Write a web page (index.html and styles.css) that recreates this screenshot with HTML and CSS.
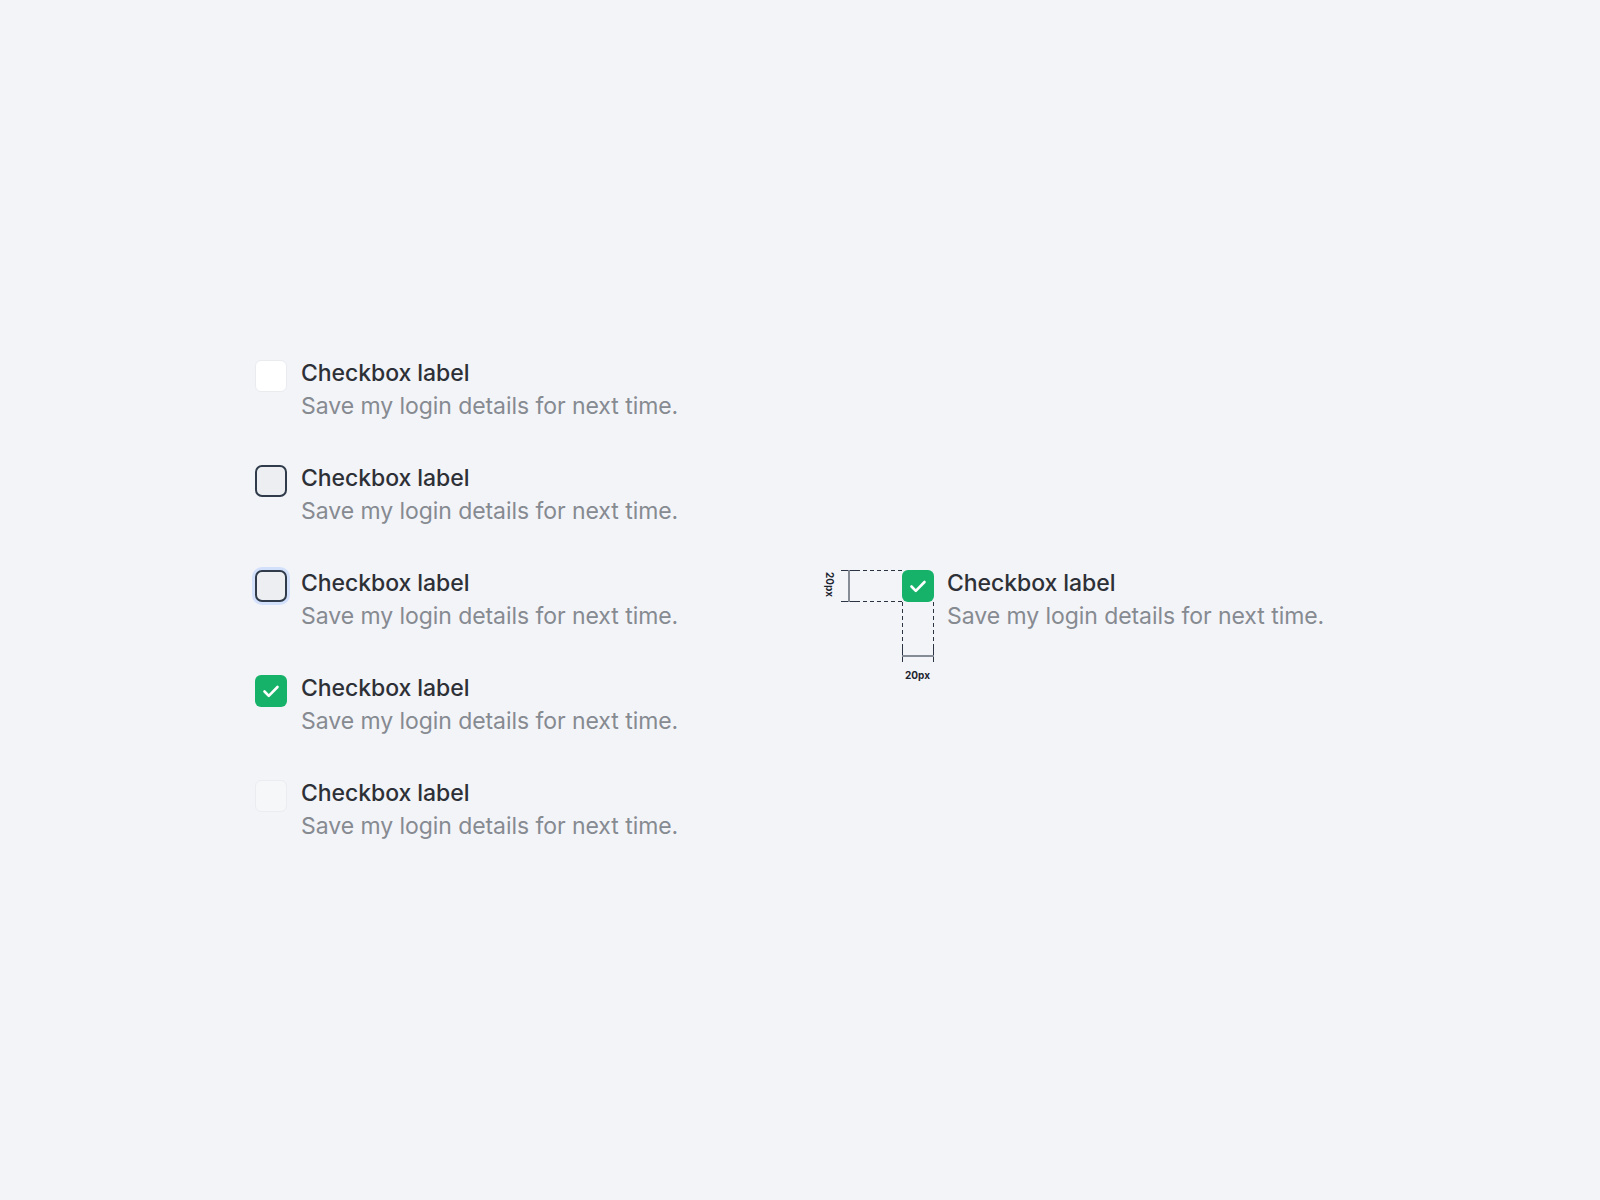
FILE: index.html
```html
<!DOCTYPE html>
<html lang="en">
<head>
<meta charset="utf-8">
<title>Checkbox</title>
<link rel="stylesheet" href="styles.css">
</head>
<body>
<main class="canvas">
  <section class="column">
    <div class="row">
      <span class="box box-default"></span>
      <div class="text">
        <div class="label">Checkbox label</div>
        <div class="desc">Save my login details for next time.</div>
      </div>
    </div>
    <div class="row">
      <span class="box box-hover"></span>
      <div class="text">
        <div class="label">Checkbox label</div>
        <div class="desc">Save my login details for next time.</div>
      </div>
    </div>
    <div class="row">
      <span class="box box-hover box-focus"></span>
      <div class="text">
        <div class="label">Checkbox label</div>
        <div class="desc">Save my login details for next time.</div>
      </div>
    </div>
    <div class="row">
      <span class="box box-checked">
        <svg viewBox="0 0 32 32" class="check"><path d="M9.5 16.5 L13.8 20.8 L22.5 12" fill="none" stroke="#fff" stroke-width="2.6" stroke-linecap="round" stroke-linejoin="round"/></svg>
      </span>
      <div class="text">
        <div class="label">Checkbox label</div>
        <div class="desc">Save my login details for next time.</div>
      </div>
    </div>
    <div class="row">
      <span class="box box-disabled"></span>
      <div class="text">
        <div class="label">Checkbox label</div>
        <div class="desc">Save my login details for next time.</div>
      </div>
    </div>
  </section>

  <section class="column column-spec">
    <div class="row">
      <span class="box box-checked box-spec">
        <svg viewBox="0 0 32 32" class="check"><path d="M9.5 16.5 L13.8 20.8 L22.5 12" fill="none" stroke="#fff" stroke-width="2.6" stroke-linecap="round" stroke-linejoin="round"/></svg>
        <span class="dash dash-h dash-top"></span>
        <span class="dash dash-h dash-bottom"></span>
        <span class="tick tick-h tick-top"></span>
        <span class="tick tick-h tick-bottom"></span>
        <span class="measure measure-v"></span>
        <span class="dim dim-v">20px</span>

        <span class="dash dash-v dash-left"></span>
        <span class="dash dash-v dash-right"></span>
        <span class="tick tick-v tick-left"></span>
        <span class="tick tick-v tick-right"></span>
        <span class="measure measure-h"></span>
        <span class="dim dim-h">20px</span>
      </span>
      <div class="text">
        <div class="label">Checkbox label</div>
        <div class="desc">Save my login details for next time.</div>
      </div>
    </div>
  </section>
</main>
</body>
</html>
```

FILE: styles.css
```css
html, body {
  margin: 0;
  padding: 0;
}

body {
  background: #f3f4f8;
  font-family: Inter, "Noto Sans", "Liberation Sans", sans-serif;
  width: 1600px;
  height: 1200px;
}

.canvas {
  display: flex;
  padding: 357px 0 0 255px;
}

.column {
  display: flex;
  flex-direction: column;
  gap: 39px;
  width: 647px;
}

.column-spec {
  padding-top: 210px;
  width: auto;
}

.row {
  display: flex;
  align-items: flex-start;
  gap: 14px;
}

.column-spec .row {
  gap: 13px;
}

.box {
  position: relative;
  flex: none;
  box-sizing: border-box;
  width: 32px;
  height: 32px;
  margin-top: 3px;
  border-radius: 6px;
}

.box-default {
  background: #ffffff;
  border: 1px solid #e9ebef;
}

.box-hover {
  background: #eceef1;
  border: 2px solid #2f3b4a;
  border-radius: 7px;
}

.box-focus {
  box-shadow: 0 0 0 3px #d3e0fb;
}

.box-checked {
  background: #17b26a;
}

.box-disabled {
  background: #f6f7f9;
  border: 1px solid #eaecf0;
}

.check {
  display: block;
  width: 32px;
  height: 32px;
}

.text {
  font-size: 23px;
  line-height: 33px;
  letter-spacing: -0.06px;
}

.label {
  color: #2d3036;
  font-weight: 470;
}

.desc {
  color: #868a91;
}

/* spec annotations (overlay on the spec checkbox) */
.dash {
  position: absolute;
}

.dash-h {
  left: -46px;
  width: 46px;
  height: 1px;
  background: repeating-linear-gradient(to right, #2a3442 0 4px, transparent 4px 7px);
}

.dash-top { top: 0; }
.dash-bottom { top: 31px; }

.dash-v {
  top: 32px;
  height: 60px;
  width: 1px;
  background: repeating-linear-gradient(to bottom, #2a3442 0 4px, transparent 4px 7px);
}

.dash-left { left: 0; }
.dash-right { left: 31px; }

.tick {
  position: absolute;
  background: #2a3442;
}

.tick-h {
  left: -61px;
  width: 15px;
  height: 1px;
}

.tick-top { top: 0; }
.tick-bottom { top: 31px; }

.tick-v {
  top: 78px;
  width: 1px;
  height: 14px;
}

.tick-left { left: 0; }
.tick-right { left: 31px; }

.measure {
  position: absolute;
  background: #868c96;
}

.measure-v {
  left: -54px;
  top: 0;
  width: 2px;
  height: 32px;
}

.measure-h {
  left: 0;
  top: 85px;
  width: 32px;
  height: 2px;
}

.dim {
  position: absolute;
  font-size: 10px;
  line-height: 12px;
  font-weight: 700;
  color: #1d2530;
  white-space: nowrap;
}

.dim-v {
  writing-mode: vertical-rl;
  left: -78px;
  top: 2px;
}

.dim-h {
  left: 3px;
  top: 99px;
}
```
